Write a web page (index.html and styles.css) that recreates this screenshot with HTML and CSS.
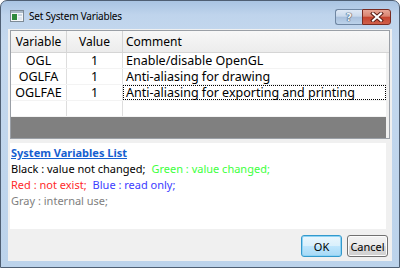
FILE: index.html
```html
<!DOCTYPE html>
<html>
<head>
<meta charset="utf-8">
<link rel="stylesheet" href="styles.css">
</head>
<body>
<div class="window">
  <div class="titlebar">
    <svg class="appicon" width="14" height="12" viewBox="0 0 14 12">
      <rect x="0.5" y="0.5" width="13" height="11" fill="#f4f6f8" stroke="#7d8a96"/>
      <rect x="1" y="1" width="12" height="2" fill="#a9b8c6"/>
      <rect x="2" y="4" width="5" height="6" fill="#2f8a3c"/>
      <rect x="8" y="4" width="4" height="2" fill="#c9d6e2"/>
      <rect x="8" y="7" width="4" height="3" fill="#dfe7ef"/>
    </svg>
    <span class="title">Set System Variables</span>
    <div class="caption-btns">
      <div class="cbtn help"><span>?</span></div>
      <div class="cbtn close">
        <svg width="14" height="10" viewBox="0 0 14 10">
          <path d="M3 1.5 L11 8.5 M11 1.5 L3 8.5" stroke="#5a1f17" stroke-width="4" stroke-linecap="square"/>
          <path d="M3 1.5 L11 8.5 M11 1.5 L3 8.5" stroke="#ffffff" stroke-width="2" stroke-linecap="square"/>
        </svg>
      </div>
    </div>
  </div>
  <div class="client">
    <div class="listframe">
      <div class="row head">
        <div class="cell c1">Variable</div>
        <div class="cell c2">Value</div>
        <div class="cell c3">Comment</div>
      </div>
      <div class="row">
        <div class="cell c1">OGL</div>
        <div class="cell c2">1</div>
        <div class="cell c3">Enable/disable OpenGL</div>
      </div>
      <div class="row">
        <div class="cell c1">OGLFA</div>
        <div class="cell c2">1</div>
        <div class="cell c3">Anti-aliasing for drawing</div>
      </div>
      <div class="row">
        <div class="cell c1">OGLFAE</div>
        <div class="cell c2">1</div>
        <div class="cell c3 focus">Anti-aliasing for exporting and printing</div>
      </div>
      <div class="row">
        <div class="cell c1"></div>
        <div class="cell c2"></div>
        <div class="cell c3"></div>
      </div>
      <div class="appspace"></div>
    </div>
    <div class="info">
      <div class="line link">System Variables List</div>
      <div class="line"><span class="black">Black : value not changed;</span><span class="green gap">Green : value changed;</span></div>
      <div class="line"><span class="red">Red : not exist;</span><span class="blue gap">Blue : read only;</span></div>
      <div class="line"><span class="gray">Gray : internal use;</span></div>
    </div>
    <div class="actions">
      <button class="btn ok">OK</button>
      <button class="btn">Cancel</button>
    </div>
  </div>
</div>
</body>
</html>
```

FILE: styles.css
```css
html, body {
  margin: 0;
  padding: 0;
  background: #ffffff;
}
body {
  font-family: "Noto Sans", "Open Sans", sans-serif;
  font-size: 12.5px;
  color: #000;
}
.window {
  width: 400px;
  height: 268px;
  box-sizing: border-box;
  border: 1px solid #4f5f73;
  border-radius: 7px 7px 0 0;
  background: linear-gradient(180deg, #a9c4e2 0px, #bfd4ec 14px, #c4d8ee 40px, #bcd3eb 100%);
  display: flex;
  flex-direction: column;
  padding: 0 7px 6px 7px;
  overflow: hidden;
}
.titlebar {
  height: 28px;
  display: flex;
  align-items: center;
  flex-shrink: 0;
}
.appicon {
  margin-left: 2px;
  margin-top: 2px;
  flex-shrink: 0;
}
.title {
  margin-left: 5px;
  margin-top: 1px;
  font-size: 10px;
  letter-spacing: -0.2px;
  color: #000;
  flex: 1;
}
.caption-btns {
  display: flex;
  align-self: flex-start;
  margin-top: 8px;
  margin-right: 1px;
}
.cbtn {
  width: 27px;
  height: 16px;
  box-sizing: border-box;
  display: flex;
  align-items: center;
  justify-content: center;
}
.help {
  border: 1px solid #6f86a2;
  border-right: none;
  border-radius: 3px 0 0 3px;
  background: linear-gradient(180deg, #dfe9f5 0%, #c9d9ec 45%, #a9c0dc 50%, #bcd2ea 100%);
}
.help span {
  font-family: "DejaVu Sans", sans-serif;
  font-weight: bold;
  font-size: 11px;
  line-height: 11px;
  color: #eef3f8;
  text-shadow: 0 0 1px #3d4f66, 0 0 1px #3d4f66, 0 0 1px #3d4f66;
}
.close {
  width: 29px;
  border: 1px solid #7a2c22;
  border-radius: 0 3px 3px 0;
  background: linear-gradient(180deg, #e8a696 0%, #d98470 45%, #c5432d 50%, #d0604b 100%);
}
.client {
  flex: 1;
  background: #f0f0f0;
  display: flex;
  flex-direction: column;
  padding: 1px 2px 0 2px;
  min-height: 0;
}
.listframe {
  height: 109px;
  box-sizing: border-box;
  border: 1px solid #9a9fa6;
  background: #f0f0f0;
  display: flex;
  flex-direction: column;
  flex-shrink: 0;
}
.row {
  display: grid;
  grid-template-columns: 56px 56px 1fr;
  height: 16px;
  background: #ffffff;
  margin-right: 3px;
  border-bottom: 1px solid #f3f3f3;
  box-sizing: border-box;
}
.row.head {
  height: 22px;
  background: linear-gradient(180deg, #f7f7f7, #ececec);
  border-bottom: 1px solid #d5d5d5;
  margin-right: 0;
}
.cell {
  box-sizing: border-box;
  border-right: 1px solid #dedede;
  line-height: 15px;
  white-space: nowrap;
  overflow: hidden;
}
.head .cell {
  line-height: 21px;
  font-size: 12px;
  border-right: 1px solid #d5d5d5;
}
.head .c3 {
  border-right: none;
}
.c1, .c2 {
  text-align: center;
}
.c3 {
  padding-left: 3px;
  border-right: none;
}
.focus {
  outline: 1px dotted #000;
  outline-offset: -1px;
}
.appspace {
  flex: 1;
  background: #808080;
  margin-right: 3px;
}
.info {
  margin-top: 4px;
  margin-right: 4px;
  height: 86px;
  background: #ffffff;
  padding: 2px 1px 0 1px;
  box-sizing: border-box;
  flex-shrink: 0;
}
.line {
  height: 16px;
  line-height: 16px;
  font-size: 11px;
  white-space: nowrap;
}
.link {
  color: #1560d0;
  font-weight: bold;
  text-decoration: underline;
}
.gap { margin-left: 6px; }
.black { color: #000000; }
.green { color: #3cff3c; }
.red { color: #ff2a2a; }
.blue { color: #3c3cff; }
.gray { color: #808080; }
.actions {
  display: flex;
  justify-content: flex-end;
  gap: 5px;
  padding-top: 6px;
  padding-right: 2px;
}
.btn {
  width: 41px;
  height: 22px;
  box-sizing: border-box;
  font-family: "Noto Sans", "Open Sans", sans-serif;
  font-size: 11px;
  color: #000;
  border: 1px solid #707070;
  border-radius: 3px;
  background: linear-gradient(180deg, #f2f2f2 0%, #ebebeb 50%, #dddddd 51%, #cfcfcf 100%);
  box-shadow: inset 0 0 0 1px #fcfcfc;
  padding: 0;
}
.ok {
  border-color: #3399cc;
  background: linear-gradient(180deg, #eaf6fd 0%, #d9f0fc 50%, #bee6fd 51%, #a7d9f5 100%);
  box-shadow: inset 0 0 0 1px #8ed3f5;
}
```
